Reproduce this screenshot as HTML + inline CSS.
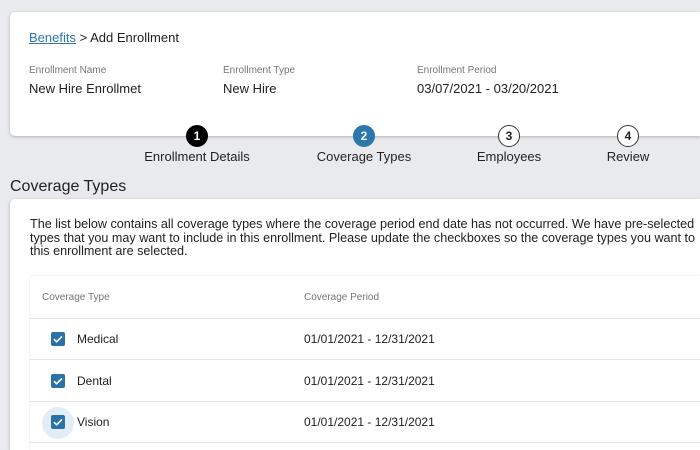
<!DOCTYPE html>
<html style="width:700px;height:450px;overflow:hidden"><head><style>
*{margin:0;padding:0;box-sizing:border-box}
body{width:700px;height:450px;overflow:hidden;background:#e9eaed;font-family:"Liberation Sans",sans-serif;color:#212121;position:relative}
.abs{position:absolute;white-space:nowrap}
.card{position:absolute;background:#fff;border-radius:5px;box-shadow:0 1px 3px rgba(0,0,0,.25)}
.lbl{font-size:10px;color:#757575}
.val{font-size:13px;color:#212121}
.circ{position:absolute;width:22px;height:22px;border-radius:50%;font-size:12px;font-weight:bold;text-align:center;line-height:20px;border:1px solid #333;background:#fff;color:#222}
.step{font-size:13px;color:#222;position:absolute;white-space:nowrap;transform:translateX(-50%)}
.row{position:absolute;left:30px;width:670px;border-top:1px solid #e6e6e6}
.cb{position:absolute;left:51px;width:14px;height:14px;background:#2b72a8;border-radius:2px}
.cb svg{position:absolute;left:1px;top:1px}
</style></head><body>
<div class="card" style="left:10px;top:12px;width:690px;height:124px;border-radius:5px 0 0 5px"></div>
<div class="abs" style="left:29px;top:30px;font-size:13px"><span style="color:#2b77ae;text-decoration:underline">Benefits</span> &gt; Add Enrollment</div>
<div class="abs lbl" style="left:29px;top:65px">Enrollment Name</div>
<div class="abs val" style="left:29px;top:81px">New Hire Enrollmet</div>
<div class="abs lbl" style="left:223px;top:65px">Enrollment Type</div>
<div class="abs val" style="left:223px;top:81px">New Hire</div>
<div class="abs lbl" style="left:417px;top:65px">Enrollment Period</div>
<div class="abs val" style="left:417px;top:81px">03/07/2021 - 03/20/2021</div>
<div class="circ" style="left:186px;top:125px;background:#000;color:#fff;border-color:#000">1</div>
<div class="circ" style="left:353px;top:125px;background:#2b77ae;color:#fff;border-color:#2b77ae">2</div>
<div class="circ" style="left:498px;top:125px">3</div>
<div class="circ" style="left:617px;top:125px">4</div>
<div class="step" style="left:197px;top:149px">Enrollment Details</div>
<div class="step" style="left:364px;top:149px">Coverage Types</div>
<div class="step" style="left:509px;top:149px">Employees</div>
<div class="step" style="left:628px;top:149px">Review</div>
<div class="abs" style="left:10px;top:178px;font-size:16px">Coverage Types</div>
<div class="card" style="left:10px;top:199px;width:690px;height:251px;border-radius:5px 0 0 0"></div>
<div class="abs" style="left:30px;top:218px;font-size:12.6px;line-height:13.5px;color:#212121">The list below contains all coverage types where the coverage period end date has not occurred. We have pre-selected<br>types that you may want to include in this enrollment. Please update the checkboxes so the coverage types you want to<br>this enrollment are selected.</div>
<div class="card" style="left:30px;top:276px;width:670px;height:174px;border-radius:4px 0 0 0;box-shadow:0 0 2px rgba(0,0,0,.15)"></div>
<div class="abs lbl" style="left:42px;top:292px;font-size:10px">Coverage Type</div>
<div class="abs lbl" style="left:304px;top:292px;font-size:10px">Coverage Period</div>
<div class="row" style="top:318px"></div>
<div class="row" style="top:359px"></div>
<div class="row" style="top:401px"></div>
<div class="row" style="top:442px"></div>
<div style="position:absolute;left:42px;top:407px;width:32px;height:32px;border-radius:50%;background:#e3edf6"></div>
<div class="cb" style="top:332px"><svg width="12" height="12" viewBox="0 0 12 12"><path d="M2 6.2l2.6 2.6L10 3.4" stroke="#fff" stroke-width="1.6" fill="none"/></svg></div>
<div class="cb" style="top:374px"><svg width="12" height="12" viewBox="0 0 12 12"><path d="M2 6.2l2.6 2.6L10 3.4" stroke="#fff" stroke-width="1.6" fill="none"/></svg></div>
<div class="cb" style="top:415px"><svg width="12" height="12" viewBox="0 0 12 12"><path d="M2 6.2l2.6 2.6L10 3.4" stroke="#fff" stroke-width="1.6" fill="none"/></svg></div>
<div class="abs val" style="left:77px;top:332px;font-size:12px">Medical</div>
<div class="abs val" style="left:77px;top:374px;font-size:12px">Dental</div>
<div class="abs val" style="left:77px;top:415px;font-size:12px">Vision</div>
<div class="abs val" style="left:304px;top:332px;font-size:12px">01/01/2021 - 12/31/2021</div>
<div class="abs val" style="left:304px;top:374px;font-size:12px">01/01/2021 - 12/31/2021</div>
<div class="abs val" style="left:304px;top:415px;font-size:12px">01/01/2021 - 12/31/2021</div>
</body></html>
